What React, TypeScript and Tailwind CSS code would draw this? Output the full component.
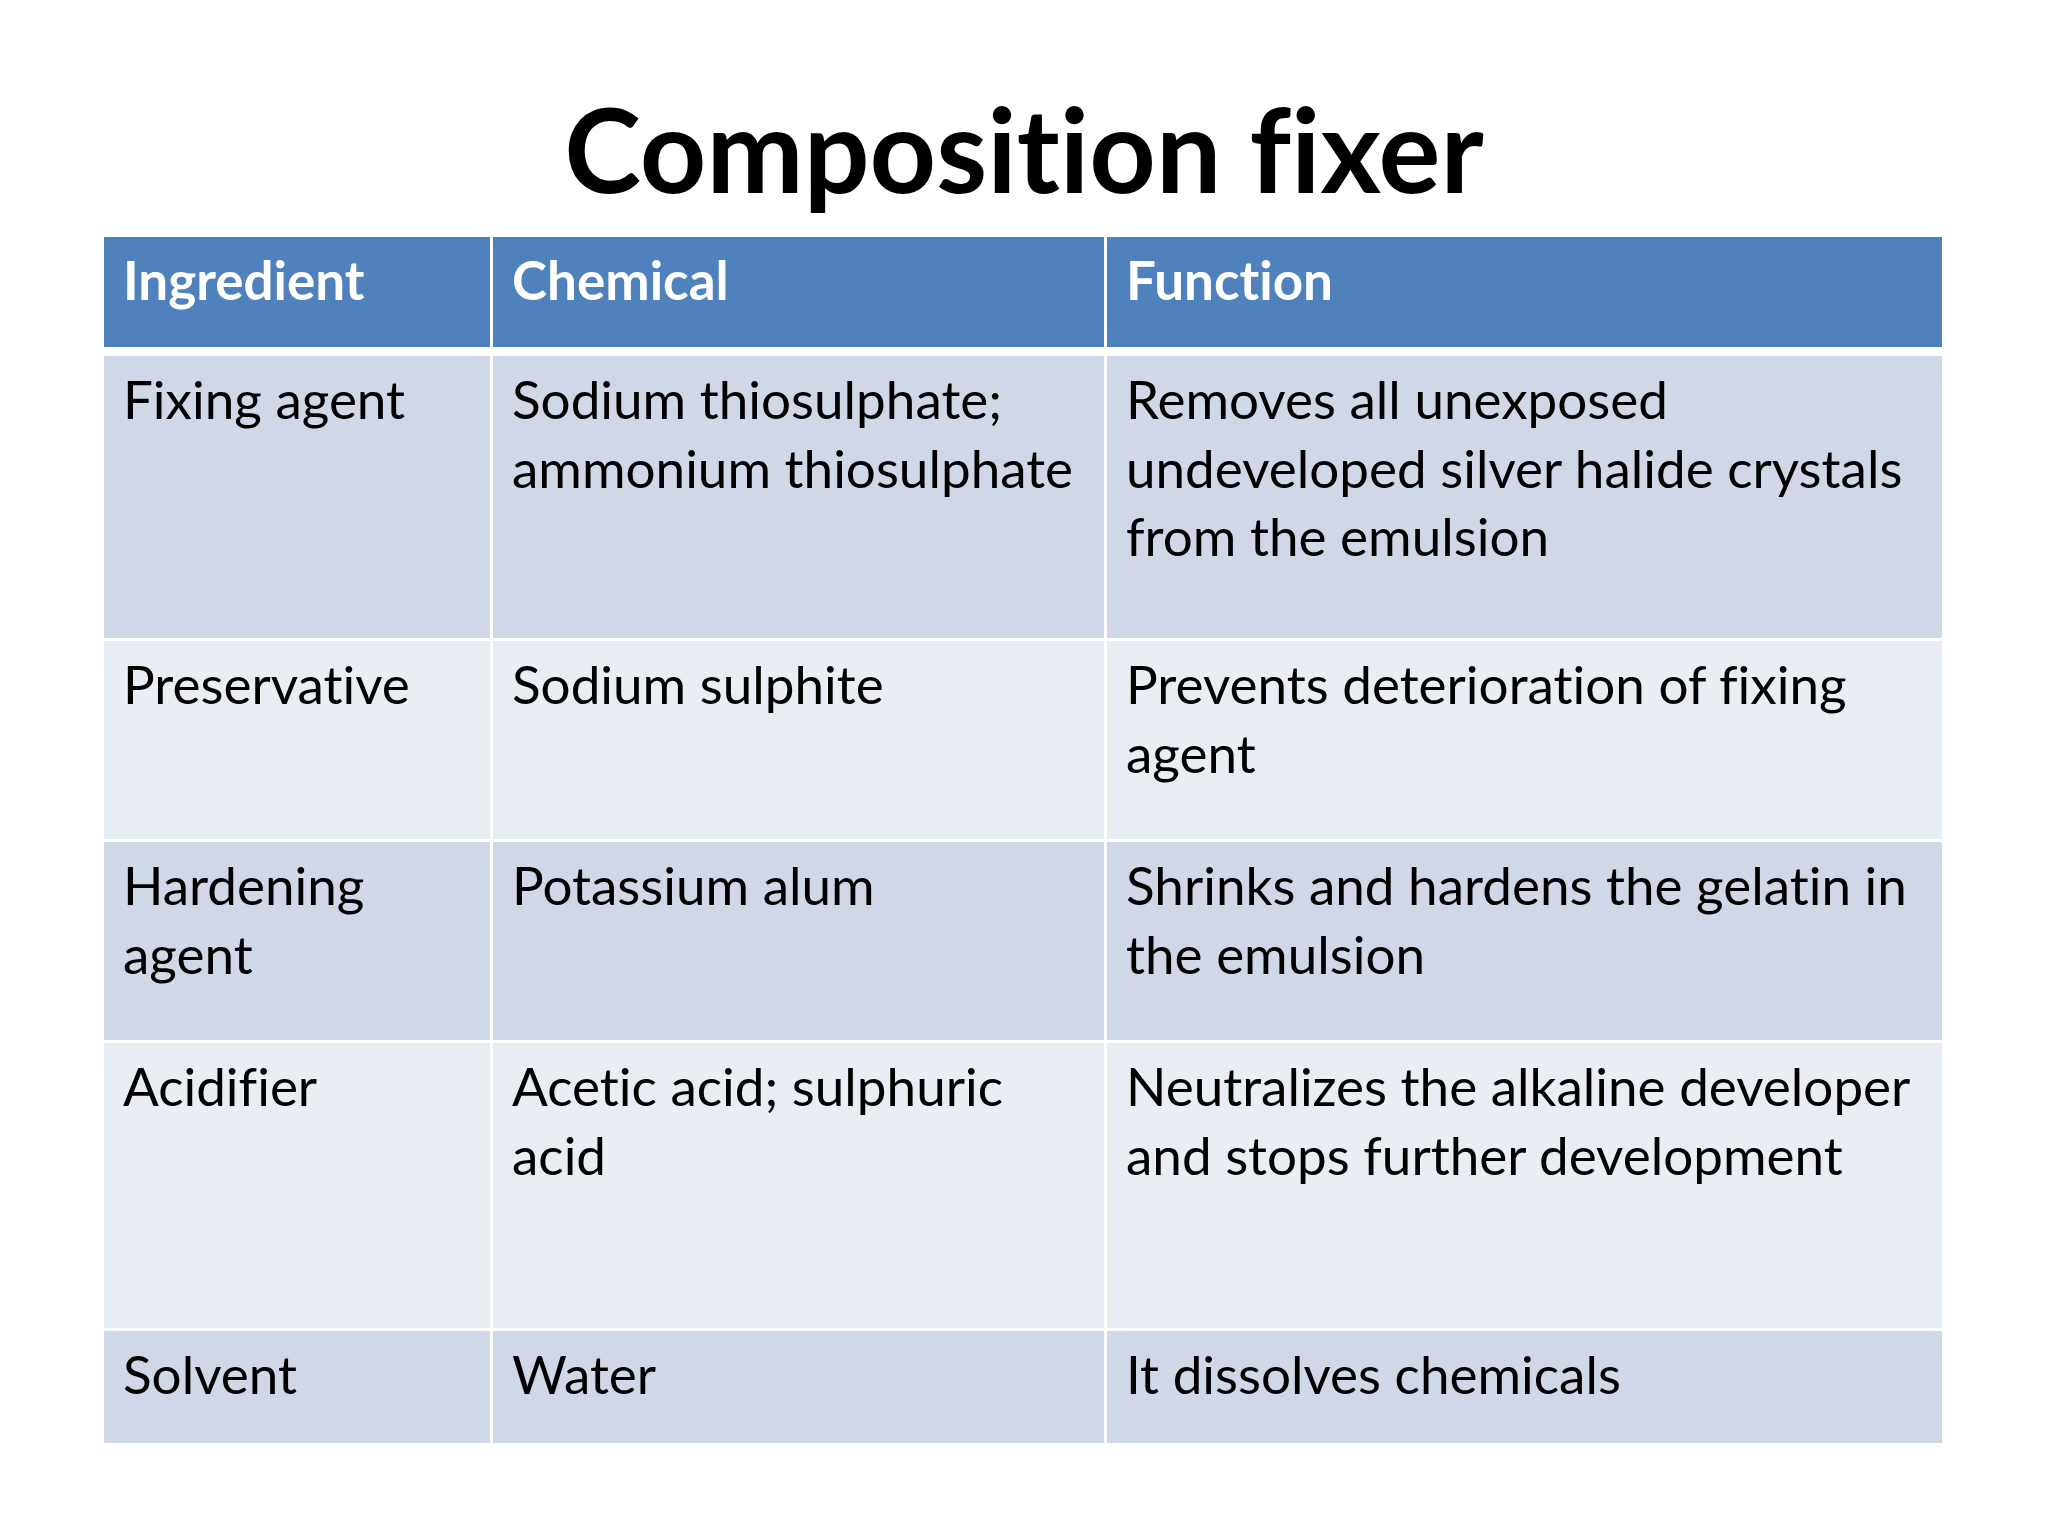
import React from "react";

type Row = { cells: string[][]; h: string; bg: string };

const rows: Row[] = [
  {
    cells: [
      ["Fixing agent"],
      ["Sodium thiosulphate;", "ammonium thiosulphate"],
      ["Removes all unexposed", "undeveloped silver halide crystals", "from the emulsion"],
    ],
    h: "h-[282px]",
    bg: "bg-[#d0d8e8]",
  },
  {
    cells: [["Preservative"], ["Sodium sulphite"], ["Prevents deterioration of fixing", "agent"]],
    h: "h-[198px]",
    bg: "bg-[#e9edf4]",
  },
  {
    cells: [["Hardening", "agent"], ["Potassium alum"], ["Shrinks and hardens the gelatin in", "the emulsion"]],
    h: "h-[198px]",
    bg: "bg-[#d0d8e8]",
  },
  {
    cells: [
      ["Acidifier"],
      ["Acetic acid; sulphuric", "acid"],
      ["Neutralizes the alkaline developer", "and stops further development"],
    ],
    h: "h-[285px]",
    bg: "bg-[#e9edf4]",
  },
  {
    cells: [["Solvent"], ["Water"], ["It dissolves chemicals"]],
    h: "h-[112px]",
    bg: "bg-[#d0d8e8]",
  },
];

function Cell({ lines, bg, bold }: { lines: string[]; bg: string; bold?: boolean }) {
  return (
    <div className={`${bg} pl-[19px] pt-[9px]`}>
      {lines.map((l, i) => (
        <div
          key={i}
          className={`whitespace-nowrap text-[53px] leading-[68.5px] ${bold ? "font-bold text-white" : "text-black"}`}
        >
          {l}
        </div>
      ))}
    </div>
  );
}

export default function App() {
  return (
    <div
      className="w-[2048px] h-[1536px] bg-white overflow-hidden pt-[79px] [font-variant-ligatures:none]"
      style={{ fontFamily: "Lato, 'Open Sans', sans-serif" }}
    >
      <h1 className="text-center text-[116px] leading-[1.2] font-bold text-black h-[139px]">
        Composition fixer
      </h1>
      <div className="ml-[104px] mt-[19px] w-[1838px] flex flex-col">
        <div className="grid grid-cols-[386px_611px_835px] gap-x-[3px] h-[110px]">
          <Cell lines={["Ingredient"]} bg="bg-[#4f81bd]" bold />
          <Cell lines={["Chemical"]} bg="bg-[#4f81bd]" bold />
          <Cell lines={["Function"]} bg="bg-[#4f81bd]" bold />
        </div>
        <div className="flex flex-col gap-y-[3px] mt-[9px]">
          {rows.map((r, i) => (
            <div key={i} className={`grid grid-cols-[386px_611px_835px] gap-x-[3px] ${r.h}`}>
              {r.cells.map((c, j) => (
                <Cell key={j} lines={c} bg={r.bg} />
              ))}
            </div>
          ))}
        </div>
      </div>
    </div>
  );
}
